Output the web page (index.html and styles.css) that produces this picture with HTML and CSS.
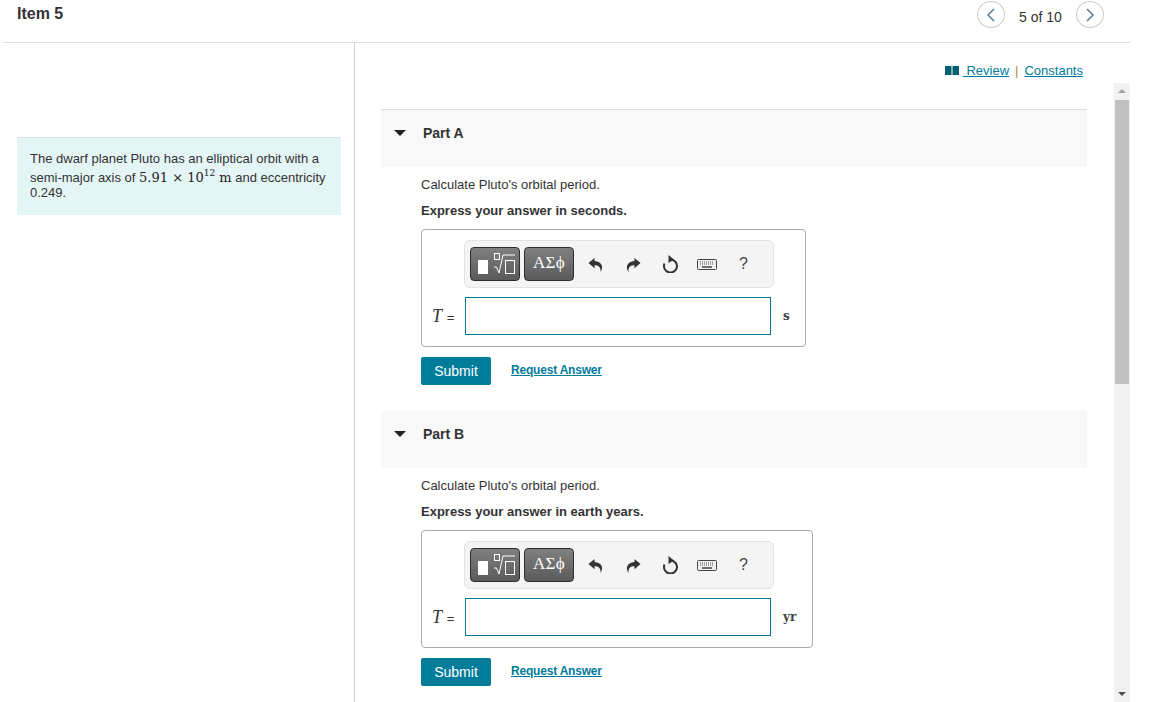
FILE: index.html
```html
<!DOCTYPE html>
<html lang="en">
<head>
<meta charset="utf-8">
<title>Item 5</title>
<link rel="stylesheet" href="styles.css">
</head>
<body>
<svg class="defs" width="0" height="0" aria-hidden="true">
  <defs>
    <symbol id="undo" viewBox="0 0 16 16"><path d="M7 1 0.500 6.500 7 12V8.800c3.200-.2 5 1 6 3.200.4 1 .5 2.500.3 4 2.400-3.500 2.200-7-.2-9.300C11.500 5.100 9.500 4.300 7 4.200z"/></symbol>
    <symbol id="redo" viewBox="0 0 16 16"><path d="M9 1l6.500 5.500L9 12V8.800c-3.200-.2-5 1-6 3.200-.4 1-.5 2.500-.3 4-2.400-3.500-2.200-7 .2-9.300C4.500 5.100 6.500 4.300 9 4.200z"/></symbol>
    <symbol id="radical" viewBox="0 0 48 32"><rect x="7" y="12" width="10" height="14" fill="#fff"/><path d="M23 19h2.500l2.500 6 4-18h12" fill="none" stroke="#fff" stroke-width="1"/><rect x="23.500" y="5.500" width="5" height="6" fill="none" stroke="#fff"/><rect x="34.500" y="12.500" width="9" height="13" fill="none" stroke="#fff"/></symbol>
    <symbol id="reset" viewBox="0 0 17 18"><path d="M8.500 4.500a6.500 6.500 0 1 1-6 4" fill="none" stroke="#333" stroke-width="2"/><path d="M6.500 0l5.500 4.500-5.500 3.500z" fill="#333"/></symbol>
    <symbol id="kbd" viewBox="0 0 20 11"><rect x=".5" y=".5" width="19" height="10" rx="1" fill="#eee" stroke="#444"/><path d="M3 3h14M3 5h14" stroke="#555" stroke-dasharray="1 1"/><path d="M5 8h10" stroke="#444" stroke-width="1.500"/></symbol>
  </defs>
</svg>
<div class="page">
  <header class="topbar">
    <div class="item-title">Item 5</div>
    <nav class="pager">
      <span class="round"><svg width="10" height="14" viewBox="0 0 10 14"><path d="M8 1 2 7l6 6" fill="none" stroke="#5a7a99" stroke-width="1.500"/></svg></span>
      <span class="pager-text">5 of 10</span>
      <span class="round"><svg width="10" height="14" viewBox="0 0 10 14"><path d="M2 1l6 6-6 6" fill="none" stroke="#5a7a99" stroke-width="1.500"/></svg></span>
    </nav>
  </header>
  <div class="columns">
    <aside class="left">
      <div class="intro">The dwarf planet Pluto has an elliptical orbit with a semi-major axis of <span class="math">5.91 × 10<sup>12</sup> m</span> and eccentricity 0.249.</div>
    </aside>
    <main class="right">
      <div class="content">
        <div class="links">
          <svg class="book" width="14" height="9" viewBox="0 0 14 9"><path d="M0 0h6.500v9H0zM7.500 0H14v9H7.500z" fill="#005f73"/></svg>
          <a class="link" href="#">&nbsp;Review</a><span class="sep">|</span><a class="link" href="#">Constants</a>
        </div>
        <section class="part">
          <div class="part-head"><span class="caret"></span><span class="part-name">Part A</span></div>
          <div class="part-body">
            <p class="q">Calculate Pluto's orbital period.</p>
            <p class="q bold">Express your answer in seconds.</p>
            <div class="answer">
              <div class="toolbar">
                <span class="tbtn tbtn-a"><svg class="rad"><use href="#radical"/></svg></span>
                <span class="tbtn tbtn-b">ΑΣϕ</span>
                <svg class="ti ti-undo"><use href="#undo"/></svg>
                <svg class="ti ti-redo"><use href="#redo"/></svg>
                <svg class="ti ti-reset"><use href="#reset"/></svg>
                <svg class="ti ti-kb"><use href="#kbd"/></svg>
                <span class="help">?</span>
              </div>
              <div class="entry">
                <span class="var"><i>T</i> <span class="eq">=</span></span>
                <span class="input"></span>
                <span class="unit">s</span>
              </div>
            </div>
            <div class="actions"><button class="submit">Submit</button><a class="req" href="#">Request Answer</a></div>
          </div>
        </section>
        <section class="part part-b">
          <div class="part-head"><span class="caret"></span><span class="part-name">Part B</span></div>
          <div class="part-body">
            <p class="q">Calculate Pluto's orbital period.</p>
            <p class="q bold">Express your answer in earth years.</p>
            <div class="answer answer-wide">
              <div class="toolbar">
                <span class="tbtn tbtn-a"><svg class="rad"><use href="#radical"/></svg></span>
                <span class="tbtn tbtn-b">ΑΣϕ</span>
                <svg class="ti ti-undo"><use href="#undo"/></svg>
                <svg class="ti ti-redo"><use href="#redo"/></svg>
                <svg class="ti ti-reset"><use href="#reset"/></svg>
                <svg class="ti ti-kb"><use href="#kbd"/></svg>
                <span class="help">?</span>
              </div>
              <div class="entry">
                <span class="var"><i>T</i> <span class="eq">=</span></span>
                <span class="input"></span>
                <span class="unit">yr</span>
              </div>
            </div>
            <div class="actions"><button class="submit">Submit</button><a class="req" href="#">Request Answer</a></div>
          </div>
        </section>
      </div>
      <div class="scrollbar">
        <span class="arrow up"></span>
        <span class="thumb"></span>
        <span class="arrow down"></span>
      </div>
    </main>
  </div>
</div>
</body>
</html>
```
FILE: styles.css
```css
* { box-sizing: border-box; }
html, body { margin: 0; height: 702px; overflow: hidden; background: #fff; }
body { font-family: "Liberation Sans", Arial, sans-serif; font-size: 13px; color: #333; }
.defs { position: absolute; }
.page { width: 1130px; height: 702px; display: flex; flex-direction: column; }
.topbar { height: 43px; margin-left: 3px; border-bottom: 1px solid #ddd; display: flex; justify-content: space-between; padding: 0 26px 0 14px; flex: none; }
.item-title { font-size: 16px; font-weight: 700; line-height: 16px; margin-top: 6px; color: #333; }
.pager { display: flex; align-items: flex-start; margin-top: 1px; }
.round { width: 28px; height: 27px; border: 1px solid #ccc; border-radius: 50%; display: flex; align-items: center; justify-content: center; }
.pager-text { font-size: 14px; line-height: 16px; margin: 8px 14px 0; width: 43px; white-space: nowrap; color: #333; }
.columns { flex: 1; display: flex; min-height: 0; }
.left { width: 355px; flex: none; border-right: 1px solid #c5d0d9; padding: 94px 13px 0 17px; }
.intro { width: 324px; height: 78px; background: #e4f5f6; border-top: 1px solid #d9e3e3; padding: 13px 13px 0; font-size: 13px; line-height: 15px; color: #333; }
.math { font-family: "DejaVu Serif", "Liberation Serif", serif; font-size: 13px; color: #222; }
.math sup { font-size: 9px; line-height: 14px; vertical-align: 6px; }
.right { flex: 1; display: flex; min-width: 0; }
.content { width: 759px; flex: none; padding-left: 26px; overflow: hidden; }
.links { height: 66px; width: 702px; padding-top: 20px; display: flex; justify-content: flex-end; align-items: flex-start; font-size: 13px; line-height: 15px; }
.book { margin: 3px 4px 0 0; }
.link { color: #007c9b; text-decoration: underline; }
.sep { color: #b58a4e; margin: 0 6px 0 6px; }
.part { margin-bottom: 26px; width: 706px; }
.part-head { height: 58px; background: #f8f8f8; border-top: 1px solid #ddd; display: flex; align-items: flex-start; padding: 15px 0 0 13px; }
.part-b .part-head { height: 57px; border-top: 0; padding-top: 15px; }
.caret { width: 0; height: 0; border-left: 6px solid transparent; border-right: 6px solid transparent; border-top: 6px solid #222; margin-top: 5px; }
.part-name { font-size: 14px; font-weight: 700; line-height: 16px; margin-left: 17px; color: #333; }
.part-body { padding: 10px 0 0 40px; }
.q { margin: 0; font-size: 13px; line-height: 15px; height: 26px; color: #333; }
.bold { font-weight: 700; }
.answer { width: 385px; height: 118px; border: 1px solid #aaa; border-radius: 4px; padding: 10px 0 0 42px; }
.answer-wide { width: 392px; }
.toolbar { width: 310px; height: 48px; background: #f4f4f4; border: 1px solid #e2e2e2; border-radius: 6px; display: flex; align-items: center; padding-left: 5px; }
.tbtn { height: 34px; border: 1px solid #2f2f2f; border-radius: 4px; background: linear-gradient(#808080, #5a5a5a); color: #fff; display: flex; align-items: center; justify-content: center; flex: none; }
.tbtn-a { width: 50px; margin-right: 4px; }
.rad { width: 48px; height: 32px; }
.tbtn-b { width: 50px; font-family: "Liberation Serif", "DejaVu Serif", serif; font-size: 17px; letter-spacing: 0.3px; padding-bottom: 2px; }
.ti { flex: none; fill: #333; }
.ti-undo { width: 15px; height: 15px; margin-left: 14px; }
.ti-redo { width: 15px; height: 15px; margin-left: 23px; }
.ti-reset { width: 17px; height: 18px; margin-left: 21px; }
.ti-kb { width: 20px; height: 11px; margin-left: 18px; }
.help { font-size: 16px; color: #444; margin: 0 0 0 22px; }
.entry { display: flex; align-items: center; margin-top: 9px; height: 38px; margin-left: -32px; }
.var { width: 33px; font-size: 13px; white-space: nowrap; color: #333; }
.var i { font-family: "Liberation Serif", serif; font-size: 18px; font-weight: 400; margin-right: 1px; }
.eq { font-size: 13px; }
.input { width: 306px; height: 38px; border: 1px solid #007c9b; background: #fff; flex: none; margin-right: 12px; }
.unit { font-family: "DejaVu Serif", "Liberation Serif", serif; font-weight: 700; font-size: 12px; color: #444; }
.actions { display: flex; align-items: flex-start; margin-top: 10px; }
.submit { width: 70px; height: 28px; background: #007c9b; color: #fff; border: 0; border-radius: 2px; font: 400 14px "Liberation Sans", sans-serif; padding: 0; }
.req { color: #007c9b; font-weight: 700; font-size: 12px; line-height: 15px; letter-spacing: -0.2px; margin: 6px 0 0 20px; text-decoration: underline; }
.scrollbar { width: 16px; flex: none; margin-top: 40px; height: 619px; background: #f1f1f1; position: relative; display: flex; justify-content: center; }
.thumb { position: absolute; top: 17px; width: 14px; height: 284px; background: #c1c1c1; }
.arrow { width: 0; height: 0; border-left: 4px solid transparent; border-right: 4px solid transparent; position: absolute; }
.arrow.up { top: 6px; border-bottom: 4px solid #a3a3a3; }
.arrow.down { bottom: 6px; border-top: 4px solid #505050; }
```
